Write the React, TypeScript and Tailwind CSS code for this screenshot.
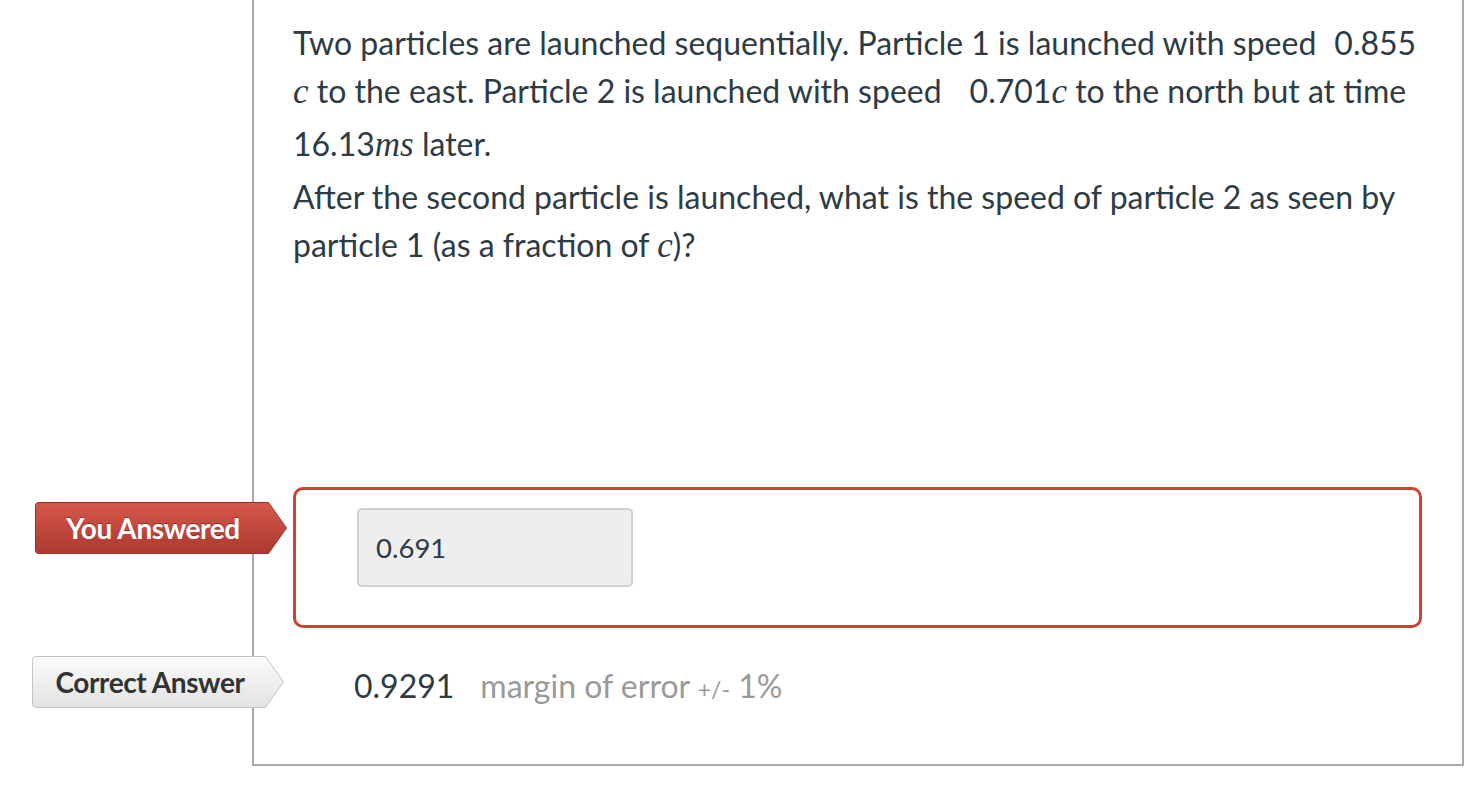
import React from "react";

function M({ children }: { children: React.ReactNode }) {
  return (
    <span className="[font-family:'Liberation_Serif','DejaVu_Serif',serif] italic text-[35px]">
      {children}
    </span>
  );
}

function Tag({
  label,
  variant,
  className,
}: {
  label: string;
  variant: "red" | "gray";
  className: string;
}) {
  const red = variant === "red";
  const id = red ? "gRed" : "gGray";
  return (
    <div className={"absolute h-[52px] w-[253px] " + className}>
      <svg
        className="absolute inset-0"
        width="253"
        height="52"
        viewBox="0 0 253 52"
      >
        <defs>
          <linearGradient id={id} x1="0" y1="0" x2="0" y2="1">
            {red ? (
              <>
                <stop offset="0" stopColor="#d8574c" />
                <stop offset="1" stopColor="#ab392f" />
              </>
            ) : (
              <>
                <stop offset="0" stopColor="#fbfbfb" />
                <stop offset="1" stopColor="#e2e2e2" />
              </>
            )}
          </linearGradient>
        </defs>
        <path
          d="M3.5 0.5 H233.5 L251.5 26 L233.5 51.5 H3.5 Q0.5 51.5 0.5 48.5 V3.5 Q0.5 0.5 3.5 0.5 Z"
          fill={`url(#${id})`}
          stroke={red ? "#9a3128" : "#c4c4c4"}
          strokeWidth="1"
        />
      </svg>
      <div
        className={
          "relative flex h-full w-[236px] items-center justify-center text-[28px] font-bold tracking-[-0.4px] " +
          (red
            ? "text-white [text-shadow:0_-1px_0_rgba(0,0,0,0.35)]"
            : "text-[#333333]")
        }
      >
        {label}
      </div>
    </div>
  );
}

export default function App() {
  return (
    <div className="h-[794px] w-[1484px] overflow-hidden bg-white [font-family:Lato,'Noto_Sans',sans-serif] text-[#2d3b45]">
      <div className="ml-[252px] h-[766px] w-[1212px] border-x-2 border-b-2 border-[#a9a9a9]">
        <div className="h-[487px] pl-[39px] pt-[19px] text-[32px] leading-[48px] whitespace-nowrap">
          <div>
            Two particles are launched sequentially. Particle 1 is launched with speed
            <span className="inline-block w-[18px]" />
            0.855
          </div>
          <div>
            <M>c</M> to the east. Particle 2 is launched with speed
            <span className="inline-block w-[28px]" />
            0.701<M>c</M> to the north but at time
          </div>
          <div className="py-[4px]">
            16.13<M>ms</M> later.
          </div>
          <div>
            After the second particle is launched, what is the speed of particle 2 as seen by
          </div>
          <div>
            particle 1 (as a fraction of <M>c</M>)?
          </div>
        </div>

        <div className="relative">
          <Tag label="You Answered" variant="red" className="left-[-219px] top-[15px]" />
          <div className="ml-[39px] mr-[40px] h-[141px] rounded-[10px] border-[3px] border-[#d23f33] pl-[61px] pt-[18px]">
            <div className="flex h-[79px] w-[276px] items-center rounded-[5px] border-2 border-[#cfcfcf] bg-[#eeeeee] pl-[17px] text-[27.5px]">
              0.691
            </div>
          </div>
        </div>

        <div className="relative mt-[28px] h-[52px]">
          <Tag label="Correct Answer" variant="gray" className="left-[-222px] top-0" />
          <div className="flex h-full items-center pl-[100px] pt-[8px] text-[32px]">
            <span>0.9291</span>
            <span className="ml-[26px] text-[#9a9a9a]">
              margin of error <span className="text-[23px]">+/-</span> 1%
            </span>
          </div>
        </div>
      </div>
    </div>
  );
}
